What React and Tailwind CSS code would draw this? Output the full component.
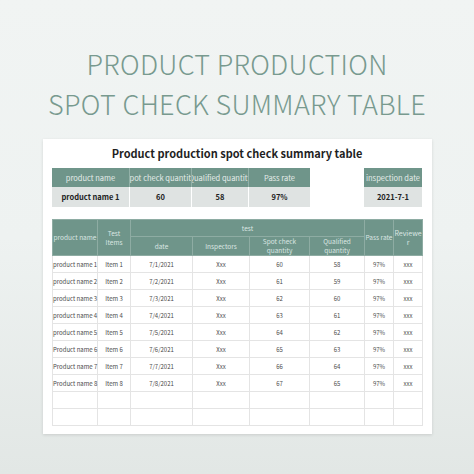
import React from 'react';

const rows = [
    { name: 'product name 1', item: 'Item 1', date: '7/1/2021', spot: 60, ok: 58 },
    { name: 'product name 2', item: 'Item 2', date: '7/2/2021', spot: 61, ok: 59 },
    { name: 'product name 3', item: 'Item 3', date: '7/3/2021', spot: 62, ok: 60 },
    { name: 'product name 4', item: 'Item 4', date: '7/4/2021', spot: 63, ok: 61 },
    { name: 'product name 5', item: 'Item 5', date: '7/5/2021', spot: 64, ok: 62 },
    { name: 'Product name 6', item: 'Item 6', date: '7/6/2021', spot: 65, ok: 63 },
    { name: 'Product name 7', item: 'Item 7', date: '7/7/2021', spot: 66, ok: 64 },
    { name: 'Product name 8', item: 'Item 8', date: '7/8/2021', spot: 67, ok: 65 },
    null,
    null,
];

const font = { fontFamily: '"Noto Sans CJK SC", "Noto Sans", sans-serif' };

// header cell that clips overflowing text on both sides
const SumHead = ({ w, children }) => (
    <div className={`${w} h-full flex items-center justify-center overflow-hidden border-r border-[#93b1a8] last:border-r-0`}>
        <span className="whitespace-nowrap">{children}</span>
    </div>
);

const SumCell = ({ w, children }) => (
    <div className={`${w} h-full flex items-center justify-center border-r border-white last:border-r-0`}>
        {children}
    </div>
);

const App = () => {
    const th = 'border border-[#8eaca3] font-normal leading-[9px] px-0';
    const td = 'border border-[#e4e4e4] h-[17px] p-0 text-center';

    return (
        <div className="w-[474px] h-[474px] bg-gradient-to-b from-[#f1f4f3] via-[#eef2f1] to-[#e2e7e5] overflow-hidden" style={font}>
            <div className="pt-[44px] text-center text-[27px] font-light leading-[40px] text-[#789a8f] tracking-[0.3px]">
                <div>PRODUCT PRODUCTION</div>
                <div>SPOT CHECK SUMMARY TABLE</div>
            </div>

            <div className="ml-[43px] mt-[15px] w-[389px] h-[295px] bg-white shadow-[0_1px_3px_rgba(0,0,0,0.12)] pl-[9px] pr-[10px] pt-[6px]">
                <h1 className="text-center text-[11px] font-bold leading-[16px] text-[#1f1f1f]">
                    Product production spot check summary table
                </h1>

                {/* summary block */}
                <div className="mt-[7px] flex">
                    <div className="flex flex-col">
                        <div className="flex h-[19px] bg-[#6f958a] text-[7.5px] text-[#e4ece9]">
                            <SumHead w="w-[78px]">product name</SumHead>
                            <SumHead w="w-[62px]">spot check quantity</SumHead>
                            <SumHead w="w-[57px]">Qualified quantity</SumHead>
                            <SumHead w="w-[61px]">Pass rate</SumHead>
                        </div>
                        <div className="flex h-[20px] bg-[#dfe3e2] text-[7.5px] font-bold text-[#222]">
                            <SumCell w="w-[78px]">product name 1</SumCell>
                            <SumCell w="w-[62px]">60</SumCell>
                            <SumCell w="w-[57px]">58</SumCell>
                            <SumCell w="w-[61px]">97%</SumCell>
                        </div>
                    </div>
                    <div className="ml-[54px] flex flex-col">
                        <div className="flex h-[19px] bg-[#6f958a] text-[7.5px] text-[#e4ece9]">
                            <SumHead w="w-[58px]">inspection date</SumHead>
                        </div>
                        <div className="flex h-[20px] bg-[#dfe3e2] text-[7.5px] font-bold text-[#222]">
                            <SumCell w="w-[58px]">2021-7-1</SumCell>
                        </div>
                    </div>
                </div>

                {/* detail table */}
                <table className="mt-[12px] w-[370px] table-fixed border-collapse text-[6px] text-[#4a4a4a]">
                    <colgroup>
                        <col className="w-[45px]" />
                        <col className="w-[33px]" />
                        <col className="w-[62px]" />
                        <col className="w-[57px]" />
                        <col className="w-[60px]" />
                        <col className="w-[55px]" />
                        <col className="w-[29px]" />
                        <col className="w-[29px]" />
                    </colgroup>
                    <thead className="bg-[#6f958a] text-[#dbe6e2] text-[6.5px]">
                        <tr className="h-[17px]">
                            <th rowSpan={2} className={`${th} whitespace-nowrap`}>product name</th>
                            <th rowSpan={2} className={th}>Test<br />Items</th>
                            <th colSpan={4} className={th}>test</th>
                            <th rowSpan={2} className={`${th} whitespace-nowrap`}>Pass rate</th>
                            <th rowSpan={2} className={`${th} text-[7px]`}>Reviewe<br />r</th>
                        </tr>
                        <tr className="h-[17px]">
                            <th className={th}>date</th>
                            <th className={th}>Inspectors</th>
                            <th className={th}>Spot check<br />quantity</th>
                            <th className={th}>Qualified<br />quantity</th>
                        </tr>
                    </thead>
                    <tbody>
                        {rows.map((r, i) => (
                            <tr key={i}>
                                <td className={`${td} text-left whitespace-nowrap`}>{r?.name}</td>
                                <td className={td}>{r?.item}</td>
                                <td className={td}>{r?.date}</td>
                                <td className={td}>{r && 'Xxx'}</td>
                                <td className={td}>{r?.spot}</td>
                                <td className={td}>{r?.ok}</td>
                                <td className={td}>{r && '97%'}</td>
                                <td className={td}>{r && 'xxx'}</td>
                            </tr>
                        ))}
                    </tbody>
                </table>
            </div>
        </div>
    );
};

export default App;
